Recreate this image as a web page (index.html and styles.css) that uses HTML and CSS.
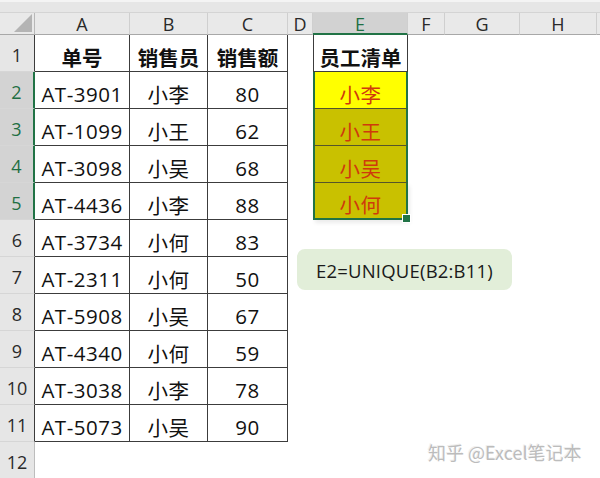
FILE: index.html
```html
<!DOCTYPE html>
<html lang="zh">
<head>
<meta charset="utf-8">
<link rel="stylesheet" href="styles.css">
</head>
<body>
<div class="page">
  <div class="sheet">
    <div class="strip"></div>

    <div class="ch corner"><span class="tri"></span></div>
    <div class="ch">A</div>
    <div class="ch">B</div>
    <div class="ch">C</div>
    <div class="ch">D</div>
    <div class="ch sel">E</div>
    <div class="ch">F</div>
    <div class="ch">G</div>
    <div class="ch">H</div>
    <div class="ch end"></div>

    <div class="rh tb">1</div>
    <div class="c t b">单号</div>
    <div class="c t b">销售员</div>
    <div class="c t b">销售额</div>
    <div class="c"></div>
    <div class="c e1 b">员工清单</div>
    <div class="c span4"></div>

    <div class="rh sel">2</div>
    <div class="c t">AT-3901</div>
    <div class="c t">小李</div>
    <div class="c t">80</div>
    <div class="c"></div>
    <div class="c es yellow">小李</div>
    <div class="c span4"></div>

    <div class="rh sel">3</div>
    <div class="c t">AT-1099</div>
    <div class="c t">小王</div>
    <div class="c t">62</div>
    <div class="c"></div>
    <div class="c es olive">小王</div>
    <div class="c span4"></div>

    <div class="rh sel">4</div>
    <div class="c t">AT-3098</div>
    <div class="c t">小吴</div>
    <div class="c t">68</div>
    <div class="c"></div>
    <div class="c es olive">小吴</div>
    <div class="c span4"></div>

    <div class="rh sel">5</div>
    <div class="c t">AT-4436</div>
    <div class="c t">小李</div>
    <div class="c t">88</div>
    <div class="c"></div>
    <div class="c es olive last">小何</div>
    <div class="c span4"></div>

    <div class="rh tb">6</div>
    <div class="c t">AT-3734</div>
    <div class="c t">小何</div>
    <div class="c t">83</div>
    <div class="c span6"></div>

    <div class="rh tb">7</div>
    <div class="c t">AT-2311</div>
    <div class="c t">小何</div>
    <div class="c t">50</div>
    <div class="c span6"></div>

    <div class="rh tb">8</div>
    <div class="c t">AT-5908</div>
    <div class="c t">小吴</div>
    <div class="c t">67</div>
    <div class="c span6"></div>

    <div class="rh tb">9</div>
    <div class="c t">AT-4340</div>
    <div class="c t">小何</div>
    <div class="c t">59</div>
    <div class="c span6"></div>

    <div class="rh tb">10</div>
    <div class="c t">AT-3038</div>
    <div class="c t">小李</div>
    <div class="c t">78</div>
    <div class="c span6"></div>

    <div class="rh tb">11</div>
    <div class="c t">AT-5073</div>
    <div class="c t">小吴</div>
    <div class="c t">90</div>
    <div class="c span6"></div>

    <div class="rh">12</div>
    <div class="c span9"></div>
  </div>

  <div class="formula">E2=UNIQUE(B2:B11)</div>
  <div class="mark">知乎 @Excel笔记本</div>
</div>
</body>
</html>
```

FILE: styles.css
```css
* { box-sizing: border-box; }
html, body { margin: 0; padding: 0; background: #ffffff; }
body { width: 600px; height: 478px; overflow: hidden; }

.page { position: relative; width: 600px; height: 478px; }

.sheet {
  display: grid;
  grid-template-columns: 35px 95px 78px 80px 25px 95px 37px 75px 77px 1fr;
  grid-template-rows: 13px 22px repeat(12, 37px);
  font-family: "Open Sans", "Noto Sans CJK SC", sans-serif;
}

.strip {
  grid-column: 1 / -1;
  background: #e6e6e6;
  border-top: 2px solid #f4f4f4;
  border-bottom: 1px solid #d4d4d4;
}

.ch {
  background: #e9e9e9;
  border-right: 1px solid #cfcfcf;
  border-bottom: 1px solid #a8a8a8;
  color: #2a2a2a;
  font-size: 18px;
  display: flex;
  align-items: center;
  justify-content: center;
  padding-top: 1px;
}
.ch.sel {
  background: #d2d2d2;
  color: #1f6f43;
  border-bottom: 2px solid #217346;
}
.ch.end { border-right: none; }
.corner {
  justify-content: flex-end;
  align-items: flex-end;
  padding: 0 2px 2px 0;
  border-right-color: #b8b8b8;
}
.tri {
  width: 18px;
  height: 18px;
  background: #b4b4b4;
  clip-path: polygon(100% 0, 100% 100%, 0 100%);
}

.rh {
  background: #e6e6e6;
  color: #2a2a2a;
  font-size: 18px;
  border-right: 1px solid #bdbdbd;
  border-bottom: 1px solid #d6d6d6;
  display: flex;
  align-items: center;
  justify-content: center;
  padding-top: 4px;
}
.rh.tb { border-right-color: #3c3c3c; }
.rh.sel {
  background: #d3d3d3;
  color: #1f6f43;
  border-right: 2px solid #217346;
}

.c {
  display: flex;
  align-items: center;
  justify-content: center;
  font-size: 20.5px;
  letter-spacing: 0.5px;
  color: #111111;
  padding-top: 7px;
  white-space: nowrap;
}
.c.b { font-family: "Noto Sans CJK SC", sans-serif; font-weight: 700; letter-spacing: 0; }
.c.t {
  border-right: 1px solid #3c3c3c;
  border-bottom: 1px solid #3c3c3c;
}
.span4 { grid-column: span 4; }
.span6 { grid-column: span 6; }
.span9 { grid-column: span 9; }

.e1 {
  border-left: 1px solid #3c3c3c;
  border-right: 1px solid #3c3c3c;
  border-bottom: 1px solid #3c3c3c;
}
.es {
  color: #cf3a0c;
  border-left: 2px solid #217346;
  border-right: 2px solid #217346;
  border-bottom: 1px solid #55552a;
  position: relative;
}
.es.yellow { background: #ffff00; }
.es.olive { background: #c9c100; }
.es.last {
  border-bottom: 2px solid #217346;
  box-shadow: 2px 3px 4px rgba(0, 0, 0, 0.08);
}
.es.last::after {
  content: "";
  position: absolute;
  right: -5px;
  bottom: -5px;
  width: 7px;
  height: 7px;
  background: #217346;
  border: 1px solid #ffffff;
}

.formula {
  position: absolute;
  left: 297px;
  top: 249px;
  width: 215px;
  height: 41px;
  border-radius: 8px;
  background: #e2eed9;
  color: #1a1a1a;
  font-family: "Open Sans", sans-serif;
  font-size: 18.5px;
  letter-spacing: 0.2px;
  display: flex;
  align-items: center;
  justify-content: center;
  padding-top: 1px;
}

.mark {
  position: absolute;
  left: 428px;
  top: 439px;
  font-family: "Noto Sans CJK SC", sans-serif;
  font-size: 18px;
  color: #bcbcbc;
  text-shadow: 1px 1px 0 #ffffff, -1px -1px 0 #f0f0f0;
  white-space: nowrap;
}
```
